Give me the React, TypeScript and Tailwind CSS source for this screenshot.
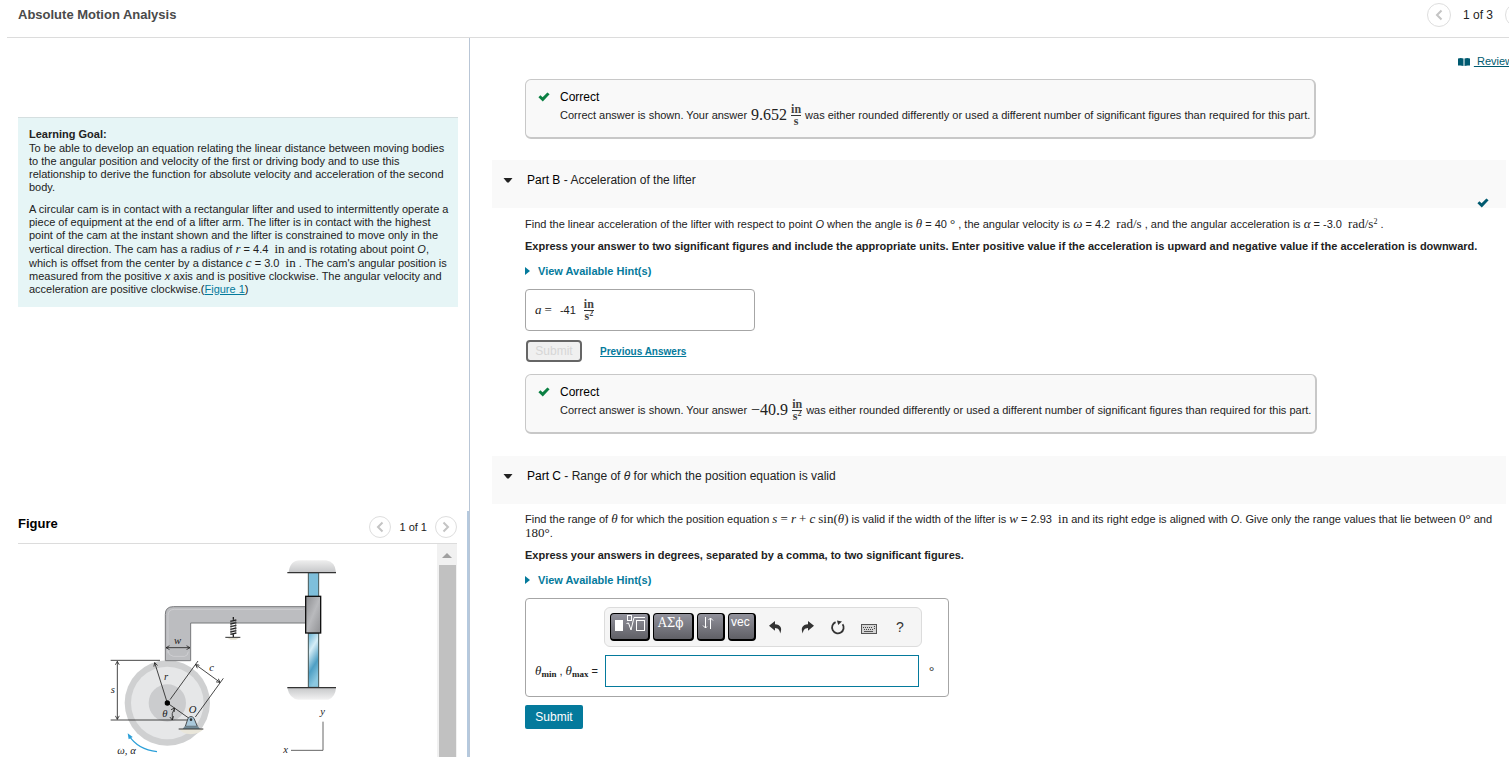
import type { ReactNode } from "react";

function Check({ className }: { className: string }) {
  return (
    <svg viewBox="0 0 12 10" className={className} fill="currentColor" aria-hidden="true">
      <path d="M0.4 5.2 L2.4 3.2 L4.6 5.2 L9.4 0.4 L11.6 2.2 L4.8 9.6 Z" />
    </svg>
  );
}

function Chevron({ flip = false }: { flip?: boolean }) {
  return (
    <svg viewBox="0 0 8 12" className="h-3 w-2" fill="none" stroke="#c4c4c4" strokeWidth="2" aria-hidden="true">
      <path d={flip ? "M1.5 1.5 L6 6 L1.5 10.5" : "M6.5 1.5 L2 6 L6.5 10.5"} />
    </svg>
  );
}

function Serif({ children }: { children: ReactNode }) {
  return <span className="font-['Liberation_Serif',serif] text-[13px] leading-none">{children}</span>;
}

function Var({ children }: { children: ReactNode }) {
  return <i className="font-['Liberation_Serif',serif] text-[13px] leading-none">{children}</i>;
}

function Fraction({ top, bottom }: { top: string; bottom: ReactNode }) {
  return (
    <span className="inline-flex flex-col items-center font-['Liberation_Serif',serif] text-xs font-bold leading-[10px] text-[#444]">
      <span className="border-b border-[#333] pb-px">{top}</span>
      <span>{bottom}</span>
    </span>
  );
}

function SecondsSquared() {
  return (
    <>
      s<sup className="text-[8px] leading-none">2</sup>
    </>
  );
}

function Feedback({ value, unit }: { value: string; unit: ReactNode }) {
  return (
    <div className="flex h-15 w-fit rounded-md border border-r-2 border-b-2 border-[#c8c8c8] bg-[#f9f9f9] pt-[9px] pr-1 pl-3">
      <Check className="mt-[3px] mr-2.5 h-2.5 w-3 shrink-0 text-[#0b8043]" />
      <div>
        <div className="text-xs leading-4 text-black">Correct</div>
        <div className="flex h-5 items-center gap-1 whitespace-nowrap">
          <span>Correct answer is shown. Your answer</span>
          <span className="font-['Liberation_Serif',serif] text-base leading-none">{value}</span>
          <Fraction top="in" bottom={unit} />
          <span>was either rounded differently or used a different number of significant figures than required for this part.</span>
        </div>
      </div>
    </div>
  );
}

function PartHeader({ name, title, done = false }: { name: string; title: ReactNode; done?: boolean }) {
  return (
    <div className="mr-[3px] flex h-12 items-start bg-[#f9f9f9] pt-3 pl-[11px]">
      <button type="button" aria-label={`Collapse ${name}`} className="mr-3.5 flex h-4 w-2.5 items-center">
        <svg viewBox="0 0 10 5" className="h-[5px] w-2.5" aria-hidden="true">
          <path d="M0.5 0 H9.5 L5.8 4.6 H4.2 Z" fill="#222" />
        </svg>
      </button>
      <h2 className="text-xs leading-4 text-[#222]">
        <span className="text-black">{name}</span> - {title}
      </h2>
      {done && <Check className="mt-auto mr-[17px] ml-auto h-2.5 w-3 text-[#005a70]" />}
    </div>
  );
}

function Hints() {
  return (
    <button type="button" className="flex items-center gap-2 font-bold leading-4 text-[#047a9c]">
      <svg viewBox="0 0 5 8" className="h-2 w-[5px]" fill="currentColor" aria-hidden="true">
        <path d="M0 0 L5 4 L0 8 Z" />
      </svg>
      View Available Hint(s)
    </button>
  );
}

function PagerButton({ label, flip, size }: { label: string; flip?: boolean; size: string }) {
  return (
    <button type="button" aria-label={label} className={`flex shrink-0 items-center justify-center rounded-full border border-[#dedede] ${size}`}>
      <Chevron flip={flip} />
    </button>
  );
}

function CamFigure() {
  return (
    <svg
      viewBox="0 0 810 636"
      className="mt-px ml-18 h-[212px] w-[270px] shrink-0"
      fontFamily="'Liberation Serif', serif"
      fontStyle="italic"
      role="img"
      aria-label="Circular cam in contact with a rectangular lifter"
    >
      <defs>
        <linearGradient id="rod" x1="0" y1="0" x2="0.3" y2="1">
          <stop offset="0" stopColor="#62b0d2" />
          <stop offset="0.35" stopColor="#d5edf7" />
          <stop offset="0.7" stopColor="#4e9fc4" />
          <stop offset="1" stopColor="#8cc8e0" />
        </linearGradient>
        <linearGradient id="collar" x1="0" y1="0" x2="1" y2="1">
          <stop offset="0" stopColor="#8c8d90" />
          <stop offset="0.5" stopColor="#b9babd" />
          <stop offset="1" stopColor="#8f9093" />
        </linearGradient>
        <linearGradient id="ceiling" x1="0" y1="0" x2="0" y2="1">
          <stop offset="0" stopColor="#eee" />
          <stop offset="1" stopColor="#c6c7c9" />
        </linearGradient>
        <linearGradient id="ground" x1="0" y1="0" x2="0" y2="1">
          <stop offset="0" stopColor="#c6c7c9" />
          <stop offset="1" stopColor="#f2f2f2" />
        </linearGradient>
        <marker id="tip" viewBox="0 0 12 12" refX="10" refY="6" markerWidth="14" markerHeight="14" markerUnits="userSpaceOnUse" orient="auto-start-reverse">
          <path d="M1 1 L10 6 L1 11" fill="none" stroke="#222" strokeWidth="2" />
        </marker>
      </defs>

      {/* guide rod and its supports */}
      <path d="M596 82 Q600 46 630 46 H708 Q736 50 738 82 Z" fill="url(#ceiling)" />
      <path d="M592 428 H738 Q736 456 715 464 H625 Q598 460 592 428 Z" fill="url(#ground)" />
      <rect x="655" y="83" width="31" height="72" fill="#7ebfdb" stroke="#455" strokeWidth="3" />
      <rect x="655" y="264" width="31" height="163" fill="url(#rod)" stroke="#455" strokeWidth="3" />
      <path d="M592 83 H738 M592 428 H738" stroke="#333" strokeWidth="4" />

      {/* cam */}
      <circle cx="232" cy="474" r="128" fill="#cfd0d1" />
      <circle cx="232" cy="474" r="109" fill="#e6e7e8" />
      <circle cx="232" cy="474" r="56" fill="#cbccce" />

      {/* lifter */}
      <path d="M226 347 V208 Q226 185 250 185 H648 V234 H302 V347 Z" fill="#bcbdc0" stroke="#77787b" strokeWidth="3" />
      <path d="M234 325 V212 Q234 193 254 193 H640" fill="none" stroke="#d6d7d9" strokeWidth="2" />
      <path d="M234 318 Q236 332 250 334 H284 Q294 332 295 320" fill="none" stroke="#d6d7d9" strokeWidth="2" />
      <rect x="647" y="154" width="45" height="110" fill="url(#collar)" stroke="#111" strokeWidth="4" />

      {/* spring */}
      <path d="M430 216 V224 M421 229 L439 225 M421 237 L439 233 M421 245 L439 241 M421 253 L439 249 M421 261 L439 257 M421 268 L439 264 M430 266 V276" fill="none" stroke="#222" strokeWidth="4" />
      <path d="M423 226 V266 M437 226 V266" stroke="#555" strokeWidth="2" />
      <path d="M408 277 H450 L438 284 H422 Z" fill="#e6e2d2" />
      <path d="M406 277 H451" stroke="#333" strokeWidth="3" />

      {/* dimensions */}
      <g stroke="#222" strokeWidth="2.5" fill="none">
        <path d="M62 346 H210 M62 525 H300" />
        <path d="M82 349 V523" markerStart="url(#tip)" markerEnd="url(#tip)" />
        <path d="M228 308 H300" markerStart="url(#tip)" markerEnd="url(#tip)" />
        <path d="M232 474 L194 353" markerEnd="url(#tip)" />
        <path d="M240 464 L324 348 M316 516 L400 400" />
        <path d="M317 359 L390 412" markerStart="url(#tip)" markerEnd="url(#tip)" />
        <path d="M232 474 L303 524" />
        <path d="M254 489 Q243 504 247 525" markerStart="url(#tip)" markerEnd="url(#tip)" />
      </g>
      <circle cx="232" cy="474" r="8" fill="#000" />

      {/* pivot */}
      <path d="M268 552 H340 Q330 567 302 568 Q276 567 268 552 Z" fill="#e9e6da" />
      <path d="M286 544 L294 520 Q303 509 312 520 L322 544 Z" fill="#a9c8da" stroke="#333" strokeWidth="2.5" />
      <path d="M284 544 H324 L330 552 H278 Z" fill="#708996" />
      <path d="M266 552 H340" stroke="#333" strokeWidth="3" />
      <circle cx="303" cy="524" r="4" fill="#333" />

      {/* rotation and axes */}
      <path d="M201 620 Q144 614 117 572" fill="none" stroke="#2b9fd8" strokeWidth="3.5" />
      <path d="M113 565 L128 576 L116 583 Z" fill="#2b9fd8" />
      <path d="M603 616 H699 V530" fill="none" stroke="#666" strokeWidth="3" />

      <g fill="#222" fontSize="32">
        <text x="252" y="298">w</text>
        <text x="222" y="405">r</text>
        <text x="358" y="379">c</text>
        <text x="62" y="445">s</text>
        <text x="217" y="515">θ</text>
        <text x="296" y="503">O</text>
        <text x="82" y="627">ω, α</text>
        <text x="691" y="510">y</text>
        <text x="580" y="625">x</text>
      </g>
    </svg>
  );
}

const keyClass =
  "flex h-7 rounded-sm border border-r-2 border-b-2 border-black bg-linear-to-b from-[#92929c] to-[#606066] text-white";

function MathToolbar() {
  return (
    <div className="flex h-10 w-[318px] items-center rounded-md border border-[#dcdcdc] bg-[#f5f5f5] pl-[5px] text-[#333]">
      <div className="flex gap-[3px]">
        <button type="button" aria-label="Templates" className={`${keyClass} w-10 pl-[3px]`}>
          <svg viewBox="0 0 32 18" className="h-[18px] w-8" fill="none" stroke="white" aria-hidden="true">
            <rect x="1" y="6" width="8" height="11" fill="white" stroke="none" />
            <rect x="13.5" y="1.5" width="4" height="5" strokeWidth="1" />
            <path d="M12.5 9.5 L14.5 9 L17 16 L20 3.5 H31" strokeWidth="1" />
            <rect x="22.5" y="6.5" width="8" height="10" strokeWidth="1" />
          </svg>
        </button>
        <button type="button" className={`${keyClass} w-[41px] pl-1 font-['DejaVu_Serif',serif] text-xs leading-[18px]`}>
          ΑΣϕ
        </button>
        <button type="button" aria-label="Arrows" className={`${keyClass} w-7 pt-0.5 pl-1`}>
          <svg viewBox="0 0 12 14" className="h-3.5 w-3" fill="none" stroke="white" strokeWidth="1" aria-hidden="true">
            <path d="M3.5 1 V12 M1 9.5 L3.5 12 L5 10.5 M8.5 13 V2 M6.5 4 L8.5 2 L11 4.5" />
          </svg>
        </button>
        <button type="button" className={`${keyClass} w-7 pl-0.5 text-xs leading-4`}>
          vec
        </button>
      </div>
      <div className="ml-3 flex items-center gap-[15px]">
        <button type="button" aria-label="Undo">
          <svg viewBox="0 0 16 16" className="size-4" fill="currentColor" aria-hidden="true">
            <path d="M1 6.8 L7 2 V5.2 C12.5 5.6 14.6 9 12.2 14.4 C11.6 10.8 10.4 9.2 7 9 V11.8 Z" />
          </svg>
        </button>
        <button type="button" aria-label="Redo">
          <svg viewBox="0 0 16 16" className="size-4" fill="currentColor" aria-hidden="true">
            <path d="M15 6.8 L9 2 V5.2 C3.5 5.6 1.4 9 3.8 14.4 C4.4 10.8 5.6 9.2 9 9 V11.8 Z" />
          </svg>
        </button>
        <button type="button" aria-label="Reset">
          <svg viewBox="0 0 16 16" className="size-4" fill="none" aria-hidden="true">
            <path d="M12.6 5.2 A5.8 5.8 0 1 1 5.6 3.2" stroke="currentColor" strokeWidth="1.8" />
            <path d="M7 1.4 L12 2.4 L8.2 6 Z" fill="currentColor" />
          </svg>
        </button>
        <button type="button" aria-label="Keyboard shortcuts">
          <svg viewBox="0 0 16 10" className="mt-1 h-2.5 w-4" fill="none" aria-hidden="true">
            <rect x="0.5" y="0.5" width="15" height="9" fill="#d4d4d4" stroke="#555" />
            <path d="M2 3.5 H11 M3 5.5 H12 M13.5 2 V6" stroke="#444" strokeDasharray="1 1" />
            <path d="M3 7.5 H12" stroke="#555" />
          </svg>
        </button>
        <button type="button" aria-label="Help" className="w-4 text-sm">
          ?
        </button>
      </div>
    </div>
  );
}

export default function App() {
  return (
    <div className="flex h-screen flex-col overflow-hidden bg-white font-['Liberation_Sans',Arial,sans-serif] text-[11px] leading-[13px] text-[#222]">
      <header className="ml-[7px] flex h-[38px] shrink-0 items-start justify-between border-b border-[#dcdcdc] pt-[3px] pl-[11px]">
        <h1 className="pt-1 text-[13px] font-bold leading-4 text-[#4a4a4a]">Absolute Motion Analysis</h1>
        <nav className="-mr-5 flex items-center gap-3 text-xs" aria-label="Problems">
          <PagerButton label="Previous problem" size="size-6" />
          <span className="whitespace-nowrap">1 of 3</span>
          <PagerButton label="Next problem" size="size-6" flip />
        </nav>
      </header>

      <div className="flex min-h-0 flex-1">
        <aside className="flex w-[470px] shrink-0 flex-col border-r border-[#b9c6d6]">
          <section className="mt-[79px] mr-[11px] ml-[18px] border-t border-[#d5dfe0] bg-[#e6f5f6] pt-2.5 pr-1 pb-[11px] pl-[11px]">
            <h2 className="font-bold">Learning Goal:</h2>
            <p className="mb-[9px] pt-px">
              To be able to develop an equation relating the linear distance between moving bodies to the angular position
              and velocity of the first or driving body and to use this relationship to derive the function for absolute
              velocity and acceleration of the second body.
            </p>
            <p>
              A circular cam is in contact with a rectangular lifter and used to intermittently operate a piece of
              equipment at the end of a lifter arm. The lifter is in contact with the highest point of the cam at the
              instant shown and the lifter is constrained to move only in the vertical direction. The cam has a radius of{" "}
              <Var>r</Var> = 4.4 &nbsp;<Serif>in</Serif> and is rotating about point <i>O</i>, which is offset from the
              center by a distance <Var>c</Var> = 3.0 &nbsp;<Serif>in</Serif> . The cam's angular position is measured
              from the positive <i>x</i> axis and is positive clockwise. The angular velocity and acceleration are
              positive clockwise.(
              <a href="#figure" className="text-[#047a9c] underline">
                Figure 1
              </a>
              )
            </p>
          </section>

          <section id="figure" className="mt-auto flex h-[246px] flex-col border-r-2 border-[#b5c9de] pr-[10px] pl-[18px]">
            <div className="flex h-[33px] shrink-0 items-start justify-between border-b border-[#dcdcdc] pt-[5px]">
              <h2 className="text-[13px] font-bold leading-4 text-black">Figure</h2>
              <nav className="flex items-center gap-2" aria-label="Figures">
                <PagerButton label="Previous figure" size="size-[22px]" />
                <span>1 of 1</span>
                <PagerButton label="Next figure" size="size-[22px]" flip />
              </nav>
            </div>
            <div className="flex min-h-0 flex-1 justify-between">
              <CamFigure />
              <div className="flex w-5 flex-col items-center bg-[#f1f1f1]" aria-hidden="true">
                <svg viewBox="0 0 10 5" className="mt-[9px] mb-[7px] h-[5px] w-2.5 shrink-0">
                  <path d="M0 5 L5 0 L10 5 Z" fill="#a0a0a0" />
                </svg>
                <div className="w-[17px] flex-1 bg-[#c1c1c1]" />
              </div>
            </div>
          </section>
        </aside>

        <main className="min-w-0 flex-1 pl-[22px]">
          <div className="flex h-[41px] items-center justify-end overflow-hidden pt-1.5">
            <a href="#review" className="-mr-1 flex items-center gap-1 text-[#005a70]">
              <svg viewBox="0 0 12 8" className="h-2 w-3" fill="currentColor" aria-hidden="true">
                <path d="M0 0.5 Q3 -0.5 5.5 0.6 V8 Q3 7 0 7.6 Z M6.5 0.6 Q9 -0.5 12 0.5 V7.6 Q9 7 6.5 8 Z" />
              </svg>
              <span className="whitespace-pre underline"> Review</span>
            </a>
          </div>

          <div className="pl-[33px]">
            <Feedback value="9.652" unit="s" />
          </div>

          <section className="mt-[21px]">
            <PartHeader name="Part B" title="Acceleration of the lifter" done />
            <div className="pt-2 pr-1 pl-[33px]">
              <p className="leading-4">
                Find the linear acceleration of the lifter with respect to point <i>O</i> when the angle is <Var>θ</Var>{" "}
                = 40 <Serif>°</Serif> , the angular velocity is <Var>ω</Var> = 4.2 &nbsp;<Serif>rad/s</Serif> , and the
                angular acceleration is <Var>α</Var> = -3.0 &nbsp;
                <Serif>
                  rad/<SecondsSquared />
                </Serif>{" "}
                .
              </p>
              <p className="mt-1.5 mb-[9px] font-bold leading-4">
                Express your answer to two significant figures and include the appropriate units. Enter positive value if
                the acceleration is upward and negative value if the acceleration is downward.
              </p>
              <Hints />
              <div className="mt-2.5 flex h-[42px] w-[230px] items-center gap-2 rounded-sm border border-[#a6a6a6] pl-[9px]">
                <span>
                  <Var>a</Var> <Serif>=</Serif>
                </span>
                <span>-41</span>
                <Fraction top="in" bottom={<SecondsSquared />} />
              </div>
              <div className="mt-[9px] mb-3 flex items-center gap-[18px] pl-px">
                <button type="button" disabled className="h-[22px] w-14 rounded-sm border-2 border-[#666] bg-[#f0f0f0] text-xs text-[#d6d6d6]">
                  Submit
                </button>
                <a href="#answers" className="text-[10px] font-bold text-[#047a9c] underline">
                  Previous Answers
                </a>
              </div>
              <Feedback value="−40.9" unit={<SecondsSquared />} />
            </div>
          </section>

          <section className="mt-[22px]">
            <PartHeader
              name="Part C"
              title={
                <>
                  Range of <i>θ</i> for which the position equation is valid
                </>
              }
            />
            <div className="pt-2 pr-1 pl-[33px]">
              <p className="leading-[14px]">
                Find the range of <Var>θ</Var> for which the position equation <Var>s</Var> <Serif>=</Serif>{" "}
                <Var>r</Var> <Serif>+</Serif> <Var>c</Var> <Serif>sin(</Serif>
                <Var>θ</Var>
                <Serif>)</Serif> is valid if the width of the lifter is <Var>w</Var> = 2.93 &nbsp;<Serif>in</Serif> and
                its right edge is aligned with <i>O</i>. Give only the range values that lie between <Serif>0°</Serif> and{" "}
                <Serif>180°</Serif>.
              </p>
              <p className="mt-[7px] mb-[9px] font-bold leading-4">
                Express your answers in degrees, separated by a comma, to two significant figures.
              </p>
              <Hints />
              <div className="mt-2.5 h-[99px] w-[424px] rounded-sm border border-[#a6a6a6] pt-2 pl-[9px]">
                <div className="pl-[69px]">
                  <MathToolbar />
                </div>
                <div className="mt-2 flex items-center">
                  <label htmlFor="theta-range" className="w-[70px] whitespace-nowrap">
                    <Var>θ</Var>
                    <sub className="font-['Liberation_Serif',serif] text-[9px] font-bold">min</sub> , <Var>θ</Var>
                    <sub className="font-['Liberation_Serif',serif] text-[9px] font-bold">max</sub> =
                  </label>
                  <input id="theta-range" type="text" className="h-8 w-[314px] border border-[#047a9c] px-2 text-sm outline-none" />
                  <span className="ml-2.5">
                    <Serif>°</Serif>
                  </span>
                </div>
              </div>
              <button type="button" className="mt-2 h-6 w-[58px] rounded-xs bg-[#047a9c] text-xs text-white">
                Submit
              </button>
            </div>
          </section>
        </main>
      </div>
    </div>
  );
}
